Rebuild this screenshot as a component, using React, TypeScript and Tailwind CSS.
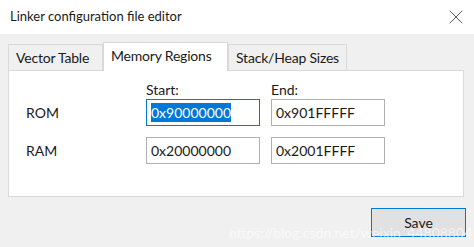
import { X } from 'lucide-react'

const font = { fontFamily: 'Lato, "Noto Sans", sans-serif' }

function Tab({ label, active, width }: { label: string; active?: boolean; width: string }) {
  return (
    <div
      className={`${width} flex items-center whitespace-nowrap border border-b-0 border-[#d9d9d9] px-[7px] text-[14px] tracking-[-0.2px] text-[#1a1a1a] ${
        active ? 'relative z-10 -mb-px h-[29px] bg-white pb-[4px]' : 'h-[26px] bg-[#f0f0f0]'
      }`}
    >
      {label}
    </div>
  )
}

function Field({ value, focused }: { value: string; focused?: boolean }) {
  return (
    <div
      className={`flex h-[27px] w-[114px] items-center whitespace-nowrap border bg-white px-[4px] text-[14px] text-[#1a1a1a] ${
        focused ? 'border-[#0078d7]' : 'border-[#b0b0b0]'
      }`}
    >
      {focused ? <span className="bg-[#0078d7] leading-[19px] text-white">{value}</span> : value}
    </div>
  )
}

export default function App() {
  return (
    <div className="relative flex h-[247px] w-[474px] flex-col overflow-hidden bg-[#f0f0f0]" style={font}>
      <div className="flex h-[34px] items-center justify-between bg-white pl-[10px] pr-[6px]">
        <span className="text-[13px] text-[#1a1a1a]">Linker configuration file editor</span>
        <X size={24} strokeWidth={0.8} className="text-[#333]" />
      </div>

      <div className="px-[8px] pt-[8px]">
        <div className="flex items-end">
          <Tab label="Vector Table" width="w-[95px]" />
          <Tab label="Memory Regions" width="w-[125px]" active />
          <Tab label="Stack/Heap Sizes" width="w-[119px]" />
        </div>
        <div className="h-[127px] w-[456px] border border-[#d9d9d9] bg-white pl-[17px] pt-[9px]">
          <div className="grid grid-cols-[109px_114px_114px] gap-x-[11px] text-[14px] text-[#1a1a1a]">
            <div />
            <div className="h-[19px] leading-[19px]">Start:</div>
            <div className="h-[19px] leading-[19px]">End:</div>

            <div className="flex items-center">ROM</div>
            <Field value="0x90000000" focused />
            <Field value="0x901FFFFF" />

            <div className="mt-[11px] flex items-center">RAM</div>
            <div className="mt-[11px]">
              <Field value="0x20000000" />
            </div>
            <div className="mt-[11px]">
              <Field value="0x2001FFFF" />
            </div>
          </div>
        </div>
      </div>

      <div className="flex justify-end pr-[8px] pt-[11px]">
        <button className="h-[29px] w-[95px] border border-[#0078d7] bg-[#e1e1e1] text-[14px] text-[#1a1a1a]">
          Save
        </button>
      </div>

      <div className="pointer-events-none absolute left-[229px] top-[222px] whitespace-nowrap text-[14px] text-white/60">
        https://blog.csdn.net/weixin_44808804
      </div>
    </div>
  )
}
